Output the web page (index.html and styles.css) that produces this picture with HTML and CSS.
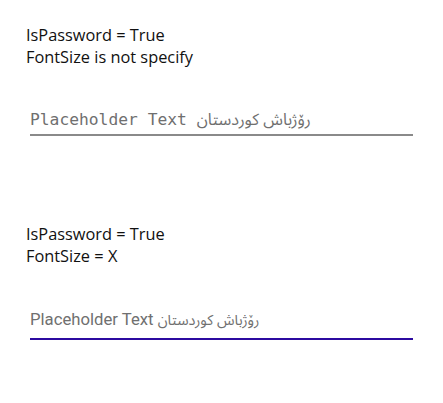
FILE: index.html
```html
<!DOCTYPE html>
<html>
<head>
<meta charset="utf-8">
<link rel="stylesheet" href="styles.css">
</head>
<body>
<div class="page">
  <section class="block">
    <div class="label">IsPassword = True<br>FontSize is not specify</div>
    <div class="entry entry-mono"><span class="ph">Placeholder Text <span class="ar">رۆژباش کوردستان</span></span></div>
  </section>
  <section class="block block2">
    <div class="label">IsPassword = True<br>FontSize = X</div>
    <div class="entry entry-sans"><span class="ph">Placeholder Text <span class="ar ar2">رۆژباش کوردستان</span></span></div>
  </section>
</div>
</body>
</html>
```
FILE: styles.css
```css
html, body { margin: 0; padding: 0; background: #fff; }
.page { padding: 24px 30px 0 26px; }
.label {
  font-family: "Open Sans", sans-serif;
  font-size: 16.35px;
  line-height: 22px;
  color: #111;
}
.entry {
  margin-left: 4px;
  display: flex;
  align-items: flex-end;
}
.entry-mono {
  margin-top: 37px;
  height: 31px;
  border-bottom: 2px solid #8a8a8a;
  font-family: "DejaVu Sans Mono", monospace;
  font-size: 16.3px;
  color: #6f6f6f;
  padding-bottom: 4px;
  box-sizing: border-box;
}
.entry-sans {
  margin-top: 39px;
  height: 34px;
  border-bottom: 2px solid #2c0aa0;
  font-family: Roboto, sans-serif;
  font-size: 16.7px;
  color: #707070;
  padding-bottom: 7px;
  box-sizing: border-box;
}
.ar { font-family: "Noto Sans Arabic", "Noto Naskh Arabic", "DejaVu Sans", sans-serif; }
.ar2 { font-size: 14.5px; }
.ph { white-space: nowrap; line-height: 20px; }
.block2 { margin-top: 87px; }
```
